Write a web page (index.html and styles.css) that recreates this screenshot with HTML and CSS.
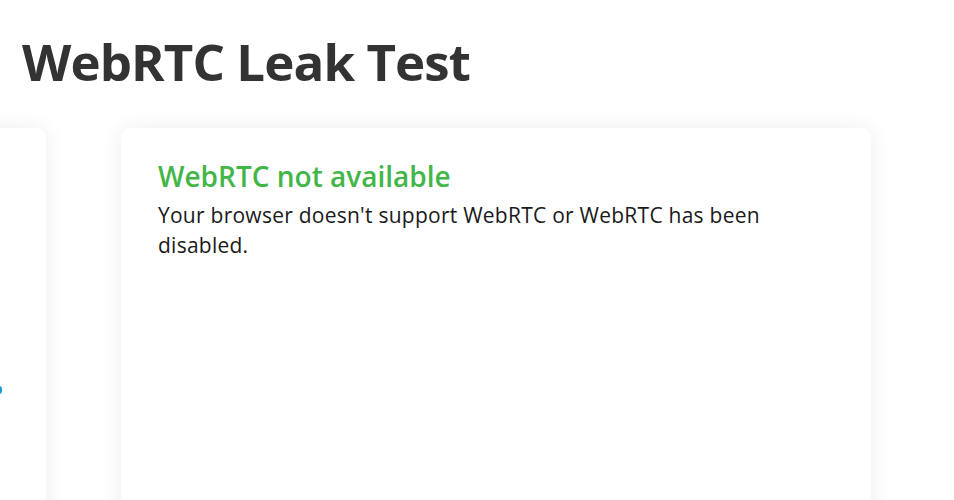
FILE: index.html
```html
<!DOCTYPE html>
<html>
<head>
    <title>WebRTC Leak Test</title>
    <meta charset="UTF-8">
    <link rel="stylesheet" href="styles.css">
</head>
<body>
    <div class="page">
        <h1 class="page-title">WebRTC Leak Test</h1>
        <div class="cards">
            <div class="card card-prev">
                <span class="prev-dot"></span>
            </div>
            <div class="card">
                <h2 class="card-title">WebRTC not available</h2>
                <p class="card-text">Your browser doesn't support WebRTC or WebRTC has been disabled.</p>
            </div>
        </div>
    </div>
</body>
</html>
```

FILE: styles.css
```css
html, body {
    margin: 0;
    background-color: #fff;
    font-family: "Open Sans", "Noto Sans", sans-serif;
    overflow: hidden;
}

.page {
    padding: 28px 0 0 22px;
}

.page-title {
    margin: 0;
    font-size: 51px;
    font-weight: 700;
    letter-spacing: -0.9px;
    color: #333;
    line-height: 66px;
}

.cards {
    display: flex;
    gap: 75px;
    margin-top: 34px;
    margin-left: -726px;
}

.card {
    flex: 0 0 750px;
    min-width: 0;
    box-sizing: border-box;
    height: 420px;
    padding: 29px 37px;
    background-color: #fff;
    border-radius: 10px;
    box-shadow: 0 0 22px rgba(0, 0, 0, 0.07);
}

.card-prev {
    display: flex;
    justify-content: flex-end;
    align-items: flex-start;
}

.prev-dot {
    margin: 229px 7px 0 0;
    width: 6px;
    height: 8px;
    border-radius: 3px;
    background-color: #1a9be0;
}

.card-title {
    margin: 0;
    font-size: 28px;
    font-weight: 600;
    color: #43b649;
    line-height: 38px;
}

.card-text {
    margin: 5px 0 0;
    font-size: 21px;
    letter-spacing: 0.25px;
    line-height: 30px;
    color: #1a1a1a;
}
```
